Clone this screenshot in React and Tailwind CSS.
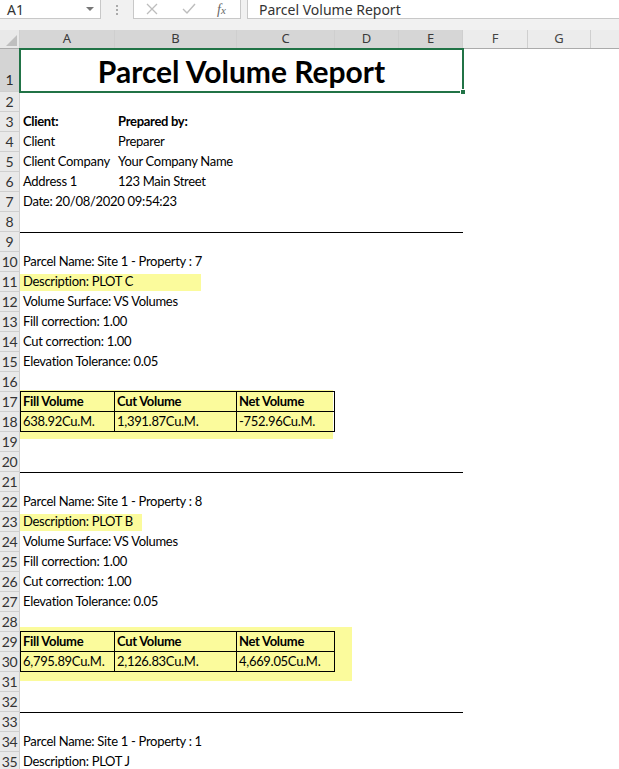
import React from "react";

const COLS = [
  { l: "A", w: 95, sel: true },
  { l: "B", w: 122, sel: true },
  { l: "C", w: 98, sel: true },
  { l: "D", w: 64, sel: true },
  { l: "E", w: 64, sel: true },
  { l: "F", w: 65, sel: false },
  { l: "G", w: 63, sel: false },
  { l: "", w: 40, sel: false },
];

const font = { fontFamily: "Lato, 'Liberation Sans', sans-serif" };

function RowHead({ n, h = "h-[20px]", sel = false, bottom = false }) {
  return (
    <div
      className={`${h} w-[20px] shrink-0 border-r border-b border-[#cfcfcf] flex justify-center ${
        bottom ? "items-end pb-[1px]" : "items-center"
      } text-[14px] tracking-[-0.3px] ${sel ? "bg-[#d4d4d4] text-[#2b2b2b]" : "bg-[#e9e9e9] text-[#333]"}`}
    >
      {n}
    </div>
  );
}

function Row({ n, children, line = false }) {
  return (
    <div className="flex h-[20px]">
      <RowHead n={n} />
      <div className="relative flex-1 flex items-center">
        {children}
        {line && <div className="absolute left-0 bottom-[-1px] w-[443px] h-[1px] bg-black" />}
      </div>
    </div>
  );
}

function Text({ children, bold = false, x = 0 }) {
  return (
    <span
      className={`absolute top-0 h-[20px] flex items-center whitespace-nowrap text-[13px] tracking-[-0.3px] text-black ${
        bold ? "font-bold" : ""
      }`}
      style={{ left: x + 3 }}
    >
      {children}
    </span>
  );
}

function Mark({ w }) {
  return <div className="h-[17px] mt-[1px] bg-[#fbfb9c]" style={{ width: w }} />;
}

function TableRows({ start, vals, hl }) {
  const widths = [95, 122, 97];
  const heads = ["Fill Volume", "Cut Volume", "Net Volume"];
  return (
    <div className="relative">
      <div
        className="absolute bg-[#fbfb9c]"
        style={{ left: 20, top: hl.top, width: hl.w, height: hl.h }}
      />
      {[heads, vals].map((r, i) => (
        <div key={i} className="relative flex h-[20px]">
          <RowHead n={start + i} />
          <div className={`flex border-l border-r border-black ${i === 0 ? "border-t border-b" : "border-b"}`} style={{ marginTop: i === 0 ? -1 : 0 }}>
            {r.map((t, j) => (
              <div
                key={j}
                className={`h-[19px] flex items-center pl-[2px] text-[13px] tracking-[-0.3px] text-black whitespace-nowrap ${
                  i === 0 ? "font-bold" : ""
                } ${j < 2 ? "border-r border-black" : ""}`}
                style={{ width: widths[j] - (j === 0 ? 1 : 0) }}
              >
                {t}
              </div>
            ))}
          </div>
        </div>
      ))}
    </div>
  );
}

function Parcel({ base, prop, plot, markW, vals, hl }) {
  return (
    <>
      <Row n={base}>
        <Text>Parcel Name: Site 1 - Property : {prop}</Text>
      </Row>
      <Row n={base + 1}>
        <Mark w={markW} />
        <Text>Description: {plot}</Text>
      </Row>
      <Row n={base + 2}>
        <Text>Volume Surface: VS Volumes</Text>
      </Row>
      <Row n={base + 3}>
        <Text>Fill correction: 1.00</Text>
      </Row>
      <Row n={base + 4}>
        <Text>Cut correction: 1.00</Text>
      </Row>
      <Row n={base + 5}>
        <Text>Elevation Tolerance: 0.05</Text>
      </Row>
      <Row n={base + 6} />
      <TableRows start={base + 7} vals={vals} hl={hl} />
      <Row n={base + 9} />
      <Row n={base + 10} line />
      <Row n={base + 11} />
    </>
  );
}

export default function App() {
  return (
    <div className="w-[619px] h-[769px] overflow-hidden bg-white select-none" style={font}>
      {/* formula bar */}
      <div className="h-[30px] bg-[#f1f1f1] flex items-start">
        <div className="w-[101px] h-[19px] bg-white border-r border-b border-[#c8c8c8] flex items-center justify-between pl-[7px] pr-[6px]">
          <span className="text-[14px] text-[#333]" style={{ fontFamily: "'Noto Sans', sans-serif" }}>A1</span>
          <span className="w-0 h-0 border-l-[4px] border-r-[4px] border-t-[4px] border-l-transparent border-r-transparent border-t-[#777]" />
        </div>
        <div className="w-[32px] h-[19px] flex flex-col items-center justify-center gap-[2px]">
          <span className="w-[2px] h-[2px] bg-[#aaa]" />
          <span className="w-[2px] h-[2px] bg-[#aaa]" />
          <span className="w-[2px] h-[2px] bg-[#aaa]" />
        </div>
        <div className="w-[108px] h-[19px] bg-white border-l border-r border-b border-[#c8c8c8] flex items-center">
          <svg width="14" height="14" viewBox="0 0 14 14" className="ml-[11px]">
            <path d="M2 2 L12 12 M12 2 L2 12" stroke="#bdbdbd" strokeWidth="1.3" />
          </svg>
          <svg width="16" height="14" viewBox="0 0 16 14" className="ml-[22px]">
            <path d="M2 7 L6 11 L14 2" stroke="#bdbdbd" strokeWidth="1.4" fill="none" />
          </svg>
          <span className="ml-[20px] text-[14px] italic text-[#666]" style={{ fontFamily: "'Liberation Serif', serif" }}>
            f<span className="text-[11px]">x</span>
          </span>
        </div>
        <div className="ml-[6px] flex-1 h-[19px] bg-white border-l border-b border-[#c8c8c8] flex items-center pl-[11px]">
          <span className="text-[14px] text-[#333]" style={{ fontFamily: "'Noto Sans', sans-serif" }}>Parcel Volume Report</span>
        </div>
      </div>

      {/* column headers */}
      <div className="flex h-[19px] border-b border-[#ababab]">
        <div className="w-[20px] shrink-0 bg-[#e9e9e9] border-r border-[#cfcfcf] relative">
          <span className="absolute right-[2px] bottom-[2px] w-0 h-0" style={{ borderBottom: "11px solid #bfbfbf", borderLeft: "11px solid transparent" }} />
        </div>
        {COLS.map((c, i) => (
          <div
            key={i}
            className={`shrink-0 border-r border-[#cfcfcf] flex items-center justify-center ${
              c.sel ? "bg-[#d6d6d6] text-[#3a3a3a]" : "bg-[#ececec] text-[#444]"
            }`}
            style={{ width: c.w, fontFamily: "'Noto Sans', sans-serif" }}
          >
            <span className="text-[13px]">{c.l}</span>
          </div>
        ))}
      </div>

      {/* row 1 title */}
      <div className="flex h-[43px]">
        <RowHead n={1} h="h-[43px]" sel bottom />
        <div className="relative w-[445px] h-[45px] -ml-[1px] -mt-[1px] border-2 border-[#217346] flex items-center justify-center">
          <span className="text-[30px] font-bold text-black leading-none" style={{ fontFamily: "Lato, sans-serif" }}>
            Parcel Volume Report
          </span>
          <span className="absolute right-[-4px] bottom-[-4px] w-[6px] h-[6px] bg-[#217346] border border-white" />
        </div>
      </div>

      <Row n={2} />
      <Row n={3}>
        <Text bold>Client:</Text>
        <Text bold x={95}>Prepared by:</Text>
      </Row>
      <Row n={4}>
        <Text>Client</Text>
        <Text x={95}>Preparer</Text>
      </Row>
      <Row n={5}>
        <Text>Client Company</Text>
        <Text x={95}>Your Company Name</Text>
      </Row>
      <Row n={6}>
        <Text>Address 1</Text>
        <Text x={95}>123 Main Street</Text>
      </Row>
      <Row n={7}>
        <Text>Date: 20/08/2020 09:54:23</Text>
      </Row>
      <Row n={8} line />
      <Row n={9} />
      <Parcel
        base={10}
        prop={7}
        plot="PLOT C"
        markW={181}
        vals={["638.92Cu.M.", "1,391.87Cu.M.", "-752.96Cu.M."]}
        hl={{ top: -2, w: 313, h: 49 }}
      />
      <Parcel
        base={22}
        prop={8}
        plot="PLOT B"
        markW={122}
        vals={["6,795.89Cu.M.", "2,126.83Cu.M.", "4,669.05Cu.M."]}
        hl={{ top: -5, w: 332, h: 54 }}
      />
      <Row n={34}>
        <Text>Parcel Name: Site 1 - Property : 1</Text>
      </Row>
      <Row n={35}>
        <Text>Description: PLOT J</Text>
      </Row>
    </div>
  );
}
